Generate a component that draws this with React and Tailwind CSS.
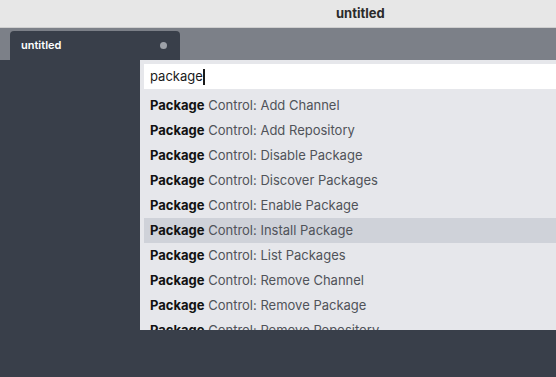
export default function App() {
    const items = [
        'Add Channel',
        'Add Repository',
        'Disable Package',
        'Discover Packages',
        'Enable Package',
        'Install Package',
        'List Packages',
        'Remove Channel',
        'Remove Package',
        'Remove Repository'
    ];

    return (
        <div className="w-[556px] h-[377px] flex flex-col overflow-hidden bg-[#393f4a] font-['Inter',sans-serif]">
            {/* Title bar */}
            <div className="h-[28px] shrink-0 flex items-center pl-[336px] bg-[#e7e7e7] border-b border-[#cfcfcf]">
                <span className="text-[13px] font-bold text-[#2b2b2b]">untitled</span>
            </div>

            {/* Tab bar */}
            <div className="h-[32px] shrink-0 flex items-end pl-[10px] bg-[#7c8088]">
                <div className="w-[170px] h-[29px] flex items-center justify-between pl-[11px] pr-[13px] rounded-t-[4px] bg-[#393f4a]">
                    <span className="text-[11px] font-semibold text-white">untitled</span>
                    <span className="w-[7px] h-[7px] rounded-full bg-[#9da1a8]"></span>
                </div>
            </div>

            {/* Editor with command palette */}
            <div className="relative flex-1">
                <div className="absolute left-[140px] top-0 right-0 h-[270px] overflow-hidden bg-[#e6e7eb] pl-[4px] pt-[4px]">
                    <div className="h-[25px] flex items-center pl-[6px] bg-white">
                        <span className="text-[13px] text-[#1a1a1a]">package</span>
                        <span className="w-[2px] h-[16px] bg-[#1a1a1a]"></span>
                    </div>
                    <div className="mt-[4px]">
                        {items.map((item, i) => (
                            <div
                                key={item}
                                className={`h-[25px] flex items-center pl-[6px] pt-[1px] text-[13px] whitespace-nowrap ${i === 5 ? 'bg-[#cfd2d9]' : ''}`}
                            >
                                <span className="font-bold text-[#111111]">Package</span>
                                <span className="text-[#505359]">&nbsp;Control: {item}</span>
                            </div>
                        ))}
                    </div>
                </div>
            </div>
        </div>
    );
}
